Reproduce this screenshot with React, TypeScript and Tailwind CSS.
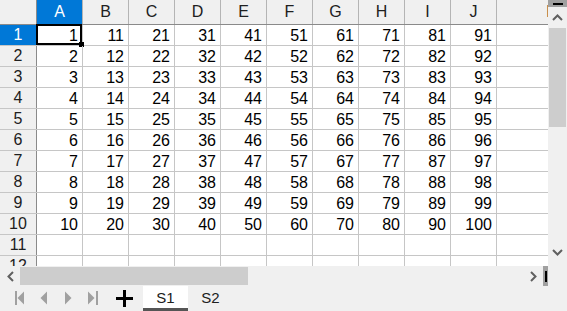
import React from "react";

const cols = ["A", "B", "C", "D", "E", "F", "G", "H", "I", "J", "K"];
const rows = Array.from({ length: 12 }, (_, i) => i + 1);

function Cell({ r, c }: { r: number; c: number }) {
  const val = r <= 10 && c < 10 ? String(c * 10 + r) : "";
  const isActive = r === 1 && c === 0;
  const wide = c === 10;
  return (
    <div
      className={`relative shrink-0 h-full border-r border-[#c6c6c6] flex items-center justify-end pr-[4px] pt-[1px] ${
        wide ? "w-[110px]" : "w-[46px]"
      }`}
    >
      <span>{val}</span>
      {isActive && (
        <>
          <div className="absolute -left-px -top-px right-0 bottom-0 border-2 border-black" />
          <div className="absolute right-[-2px] bottom-[-2px] w-[5px] h-[5px] bg-black" />
        </>
      )}
    </div>
  );
}

export default function App() {
  return (
    <div
      className="w-[567px] h-[311px] flex flex-col bg-[#f0f0f0] overflow-hidden text-black text-[16px]"
      style={{ fontFamily: '"Liberation Sans", Arial, sans-serif' }}
    >
      {/* top area */}
      <div className="flex h-[266px]">
        <div className="flex-1 overflow-hidden bg-white flex flex-col">
          {/* header */}
          <div className="flex h-[25px] shrink-0 border-b border-[#8a8a8a] bg-[#f0f0f0]">
            <div className="w-[37px] shrink-0 border-r border-[#8a8a8a]" />
            {cols.map((c, i) => (
              <div
                key={c}
                className={`shrink-0 h-full flex items-center justify-center border-r border-[#b4b4b4] ${
                  i === 10 ? "w-[110px]" : "w-[46px]"
                } ${i === 0 ? "bg-[#0078d7] text-white" : "text-[#202020]"}`}
              >
                {c}
              </div>
            ))}
          </div>
          {rows.map((r) => (
            <div key={r} className="flex h-[21px] shrink-0 border-b border-[#c6c6c6]">
              <div
                className={`w-[37px] shrink-0 h-full flex items-center justify-center border-r border-[#8a8a8a] ${
                  r === 1 ? "bg-[#0078d7] text-white" : "bg-[#f0f0f0] text-[#202020]"
                }`}
              >
                {r}
              </div>
              {cols.map((c, i) => (
                <Cell key={c} r={r} c={i} />
              ))}
            </div>
          ))}
        </div>
        {/* vertical scrollbar */}
        <div className="w-[19px] shrink-0 flex flex-col bg-[#f0f0f0]">
          <div className="h-[7px] bg-[#a0a0a0] flex items-center justify-center">
            <div className="w-[10px] h-[2px] bg-black" />
          </div>
          <div className="h-[21px] flex items-center justify-center">
            <svg width="11" height="7" viewBox="0 0 11 7">
              <polyline points="1,6 5.5,1.5 10,6" fill="none" stroke="#606060" strokeWidth="2" />
            </svg>
          </div>
          <div className="h-[99px] mx-px bg-[#cdcdcd]" />
          <div className="flex-1" />
          <div className="h-[21px] flex items-center justify-center pb-[6px]">
            <svg width="11" height="7" viewBox="0 0 11 7">
              <polyline points="1,1 5.5,5.5 10,1" fill="none" stroke="#606060" strokeWidth="2" />
            </svg>
          </div>
        </div>
      </div>
      {/* horizontal scrollbar */}
      <div className="flex h-[20px] items-center">
        <div className="w-[20px] h-full flex items-center justify-center">
          <svg width="7" height="11" viewBox="0 0 7 11">
            <polyline points="6,1 1.5,5.5 6,10" fill="none" stroke="#606060" strokeWidth="2" />
          </svg>
        </div>
        <div className="w-[228px] h-[18px] bg-[#cdcdcd]" />
        <div className="flex-1" />
        <div className="w-[20px] h-full flex items-center justify-center">
          <svg width="7" height="11" viewBox="0 0 7 11">
            <polyline points="1,1 5.5,5.5 1,10" fill="none" stroke="#606060" strokeWidth="2" />
          </svg>
        </div>
        <div className="w-[5px] h-full bg-[#a0a0a0] flex items-center justify-center">
          <div className="w-[2px] h-[11px] bg-black" />
        </div>
        <div className="w-[19px]" />
      </div>
      {/* tab bar */}
      <div className="flex h-[25px] items-stretch">
        <div className="w-[143px] flex items-center relative">
          <svg className="absolute left-[15px] top-[5px]" width="9" height="14" viewBox="0 0 9 14">
            <rect x="0" y="0" width="2" height="14" fill="#a0a0a0" />
            <polygon points="9,0.5 2.5,7 9,13.5" fill="#a0a0a0" />
          </svg>
          <svg className="absolute left-[40px] top-[5px]" width="8" height="14" viewBox="0 0 8 14">
            <polygon points="7,0.5 0.5,7 7,13.5" fill="#a0a0a0" />
          </svg>
          <svg className="absolute left-[64px] top-[5px]" width="8" height="14" viewBox="0 0 8 14">
            <polygon points="1,0.5 7.5,7 1,13.5" fill="#a0a0a0" />
          </svg>
          <svg className="absolute left-[88px] top-[5px]" width="10" height="14" viewBox="0 0 10 14">
            <polygon points="0,0.5 6.5,7 0,13.5" fill="#a0a0a0" />
            <rect x="8" y="0" width="2" height="14" fill="#a0a0a0" />
          </svg>
          <svg className="absolute left-[116px] top-[4px]" width="17" height="17" viewBox="0 0 17 17">
            <rect x="0" y="7" width="17" height="3" fill="#000" />
            <rect x="7" y="0" width="3" height="17" fill="#000" />
          </svg>
        </div>
        <div className="w-[45px] bg-white border-b-[3px] border-[#555] flex items-center justify-center pt-[3px] text-[15px] text-[#202020]">
          S1
        </div>
        <div className="w-[45px] flex items-center justify-center text-[15px] text-[#202020]">
          S2
        </div>
      </div>
    </div>
  );
}
